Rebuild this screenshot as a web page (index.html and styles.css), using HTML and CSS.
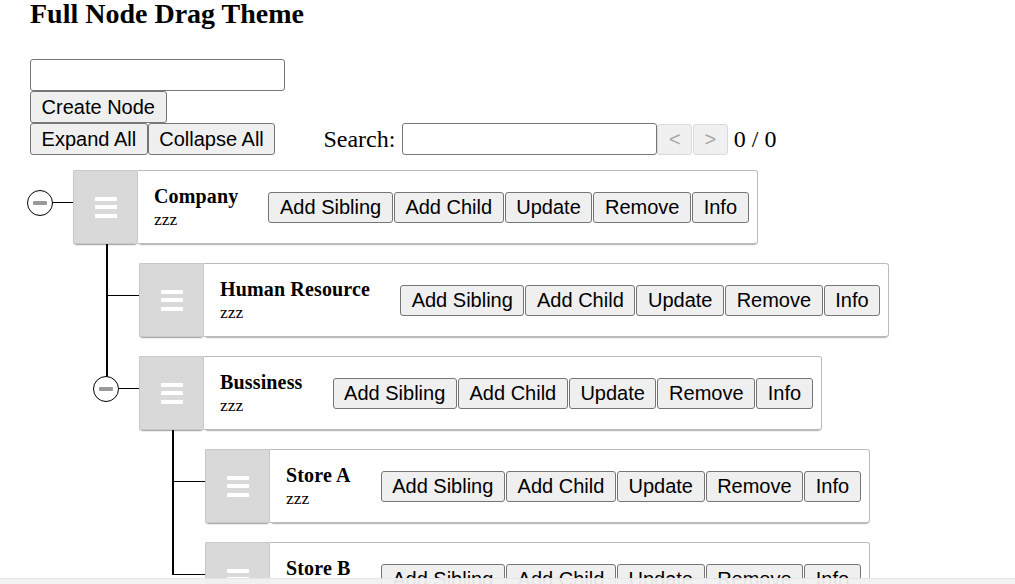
FILE: index.html
```html
<!DOCTYPE html>
<html lang="en">
<head>
<meta charset="utf-8">
<title>Full Node Drag Theme</title>
<link rel="stylesheet" href="styles.css">
</head>
<body>
<h1 class="page-title">Full Node Drag Theme</h1>
<div class="controls">
  <div class="create-row">
    <input class="text-input" type="text">
    <button class="btn" type="button">Create Node</button>
  </div>
  <div class="tool-row">
    <button class="btn" type="button">Expand All</button>
    <button class="btn" type="button">Collapse All</button>
    <form class="search">
      <label class="search-label">Search:</label>
      <input class="text-input" type="text">
      <button class="btn nav-btn" type="button" disabled>&lt;</button>
      <button class="btn nav-btn next" type="button" disabled>&gt;</button>
      <span class="count">0 / 0</span>
    </form>
  </div>
</div>

<div class="tree">
  <div class="row">
    <div class="sc h"><button class="collapse" type="button"><span class="minus"></span></button></div>
    <div class="node kids">
      <div class="handle"><span></span><span></span><span></span></div>
      <div class="contents">
        <div class="label"><div class="node-title">Company</div><div class="node-sub">zzz</div></div>
        <div class="node-btns"><button class="btn" type="button">Add Sibling</button><button class="btn" type="button">Add Child</button><button class="btn" type="button">Update</button><button class="btn" type="button">Remove</button><button class="btn" type="button">Info</button></div>
      </div>
    </div>
  </div>

  <div class="row">
    <div class="sc"></div>
    <div class="sc vf h"></div>
    <div class="node">
      <div class="handle"><span></span><span></span><span></span></div>
      <div class="contents">
        <div class="label"><div class="node-title">Human Resource</div><div class="node-sub">zzz</div></div>
        <div class="node-btns"><button class="btn" type="button">Add Sibling</button><button class="btn" type="button">Add Child</button><button class="btn" type="button">Update</button><button class="btn" type="button">Remove</button><button class="btn" type="button">Info</button></div>
      </div>
    </div>
  </div>

  <div class="row">
    <div class="sc"></div>
    <div class="sc vh h"><button class="collapse" type="button"><span class="minus"></span></button></div>
    <div class="node kids">
      <div class="handle"><span></span><span></span><span></span></div>
      <div class="contents">
        <div class="label"><div class="node-title">Bussiness</div><div class="node-sub">zzz</div></div>
        <div class="node-btns"><button class="btn" type="button">Add Sibling</button><button class="btn" type="button">Add Child</button><button class="btn" type="button">Update</button><button class="btn" type="button">Remove</button><button class="btn" type="button">Info</button></div>
      </div>
    </div>
  </div>

  <div class="row">
    <div class="sc"></div>
    <div class="sc"></div>
    <div class="sc vf h"></div>
    <div class="node">
      <div class="handle"><span></span><span></span><span></span></div>
      <div class="contents">
        <div class="label"><div class="node-title">Store A</div><div class="node-sub">zzz</div></div>
        <div class="node-btns"><button class="btn" type="button">Add Sibling</button><button class="btn" type="button">Add Child</button><button class="btn" type="button">Update</button><button class="btn" type="button">Remove</button><button class="btn" type="button">Info</button></div>
      </div>
    </div>
  </div>

  <div class="row">
    <div class="sc"></div>
    <div class="sc"></div>
    <div class="sc vh h"></div>
    <div class="node">
      <div class="handle"><span></span><span></span><span></span></div>
      <div class="contents">
        <div class="label"><div class="node-title">Store B</div><div class="node-sub">zzz</div></div>
        <div class="node-btns"><button class="btn" type="button">Add Sibling</button><button class="btn" type="button">Add Child</button><button class="btn" type="button">Update</button><button class="btn" type="button">Remove</button><button class="btn" type="button">Info</button></div>
      </div>
    </div>
  </div>
</div>
<div class="hscroll"></div>
</body>
</html>
```

FILE: styles.css
```css
html, body {
  margin: 0;
  padding: 0;
  overflow: hidden;
}

body {
  width: 1015px;
  height: 584px;
  background: #fff;
  color: #000;
  font-family: "Liberation Serif", "Times New Roman", serif;
}

.page-title {
  margin: 0;
  padding-left: 30px;
  font-size: 28px;
  line-height: 28px;
  font-weight: bold;
}

.controls {
  padding-left: 30px;
  margin-top: 31px;
}

.create-row {
  display: flex;
  flex-direction: column;
  align-items: flex-start;
}

.text-input {
  display: block;
  box-sizing: border-box;
  width: 255px;
  height: 32px;
  margin: 0;
  padding: 1px 3px;
  border: 1px solid #767676;
  border-radius: 3px;
  background: #fff;
  font: 20px "Liberation Sans", Arial, sans-serif;
}

.btn {
  box-sizing: border-box;
  height: 32px;
  margin: 0;
  padding: 0 10.6px;
  border: 1px solid #767676;
  border-radius: 3px;
  background: #efefef;
  color: #000;
  font: 20px/1 "Liberation Sans", Arial, sans-serif;
  white-space: nowrap;
}

.btn:disabled {
  background: #f0f0f0;
  border-color: #dadada;
  color: #a8a8a8;
}

.tool-row {
  display: flex;
  align-items: center;
}

.search {
  display: flex;
  align-items: center;
  margin: 0 0 0 48px;
  font-size: 24px;
}

.search-label {
  margin-right: 7px;
}

.nav-btn {
  height: 31px;
  padding: 0 10.5px;
}

.nav-btn.next {
  margin-left: 1px;
}

.count {
  margin-left: 6px;
}

/* tree */
.tree {
  margin-top: 5px;
  padding-left: 7px;
}

.row {
  display: flex;
  height: 93px;
}

.sc {
  position: relative;
  flex: none;
  width: 66px;
  height: 93px;
}

.sc.h::after {
  content: "";
  position: absolute;
  left: 33px;
  right: 0;
  top: 42px;
  height: 1px;
  background: #000;
}

.sc.vf::before,
.sc.vh::before {
  content: "";
  position: absolute;
  left: 33px;
  width: 2px;
  top: 0;
  background: #000;
}

.sc.vf::before {
  bottom: 0;
}

.sc.vh::before {
  height: 43px;
}

.collapse {
  position: absolute;
  z-index: 2;
  left: 20px;
  top: 30px;
  width: 26px;
  height: 26px;
  box-sizing: border-box;
  margin: 0;
  padding: 0;
  border: 1px solid #000;
  border-radius: 50%;
  background: #fff;
  display: flex;
  align-items: center;
  justify-content: center;
}

.minus {
  display: block;
  width: 14px;
  height: 4px;
  border-radius: 1px;
  background: #9a9a9a;
}

.node {
  position: relative;
  display: flex;
  flex: none;
  margin-top: 10px;
  height: 74px;
}

.node.kids::after {
  content: "";
  position: absolute;
  left: 33px;
  width: 2px;
  top: 74px;
  height: 10px;
  background: #000;
}

.handle {
  box-sizing: border-box;
  width: 65px;
  height: 74px;
  background: #d9d9d9;
  border: 1px solid #c8c8c8;
  border-radius: 1px;
  box-shadow: 0 2px 2px -2px #000;
  display: flex;
  flex-direction: column;
  align-items: center;
  justify-content: center;
  gap: 4.5px;
}

.handle span {
  display: block;
  width: 22px;
  height: 4px;
  background: #fff;
}

.contents {
  box-sizing: border-box;
  display: flex;
  align-items: center;
  height: 74px;
  padding: 0 8px 0 16px;
  border: 1px solid #bbb;
  border-left: none;
  border-radius: 0 3px 3px 0;
  background: #fff;
  box-shadow: 0 2px 2px -2px #000;
}

.label {
  padding-right: 30px;
  white-space: nowrap;
}

.node-title {
  font-size: 20px;
  line-height: 23px;
  font-weight: bold;
  letter-spacing: 0.15px;
}

.node-sub {
  margin-top: 2px;
  font-size: 17.5px;
  line-height: 19px;
}

.node-btns {
  display: flex;
  gap: 1px;
}

.node-btns .btn {
  height: 31px;
}

.hscroll {
  position: fixed;
  left: 0;
  right: 0;
  bottom: 0;
  height: 5px;
  background: rgba(241, 241, 241, 0.94);
  border-top: 1px solid #e4e4e4;
}
```
